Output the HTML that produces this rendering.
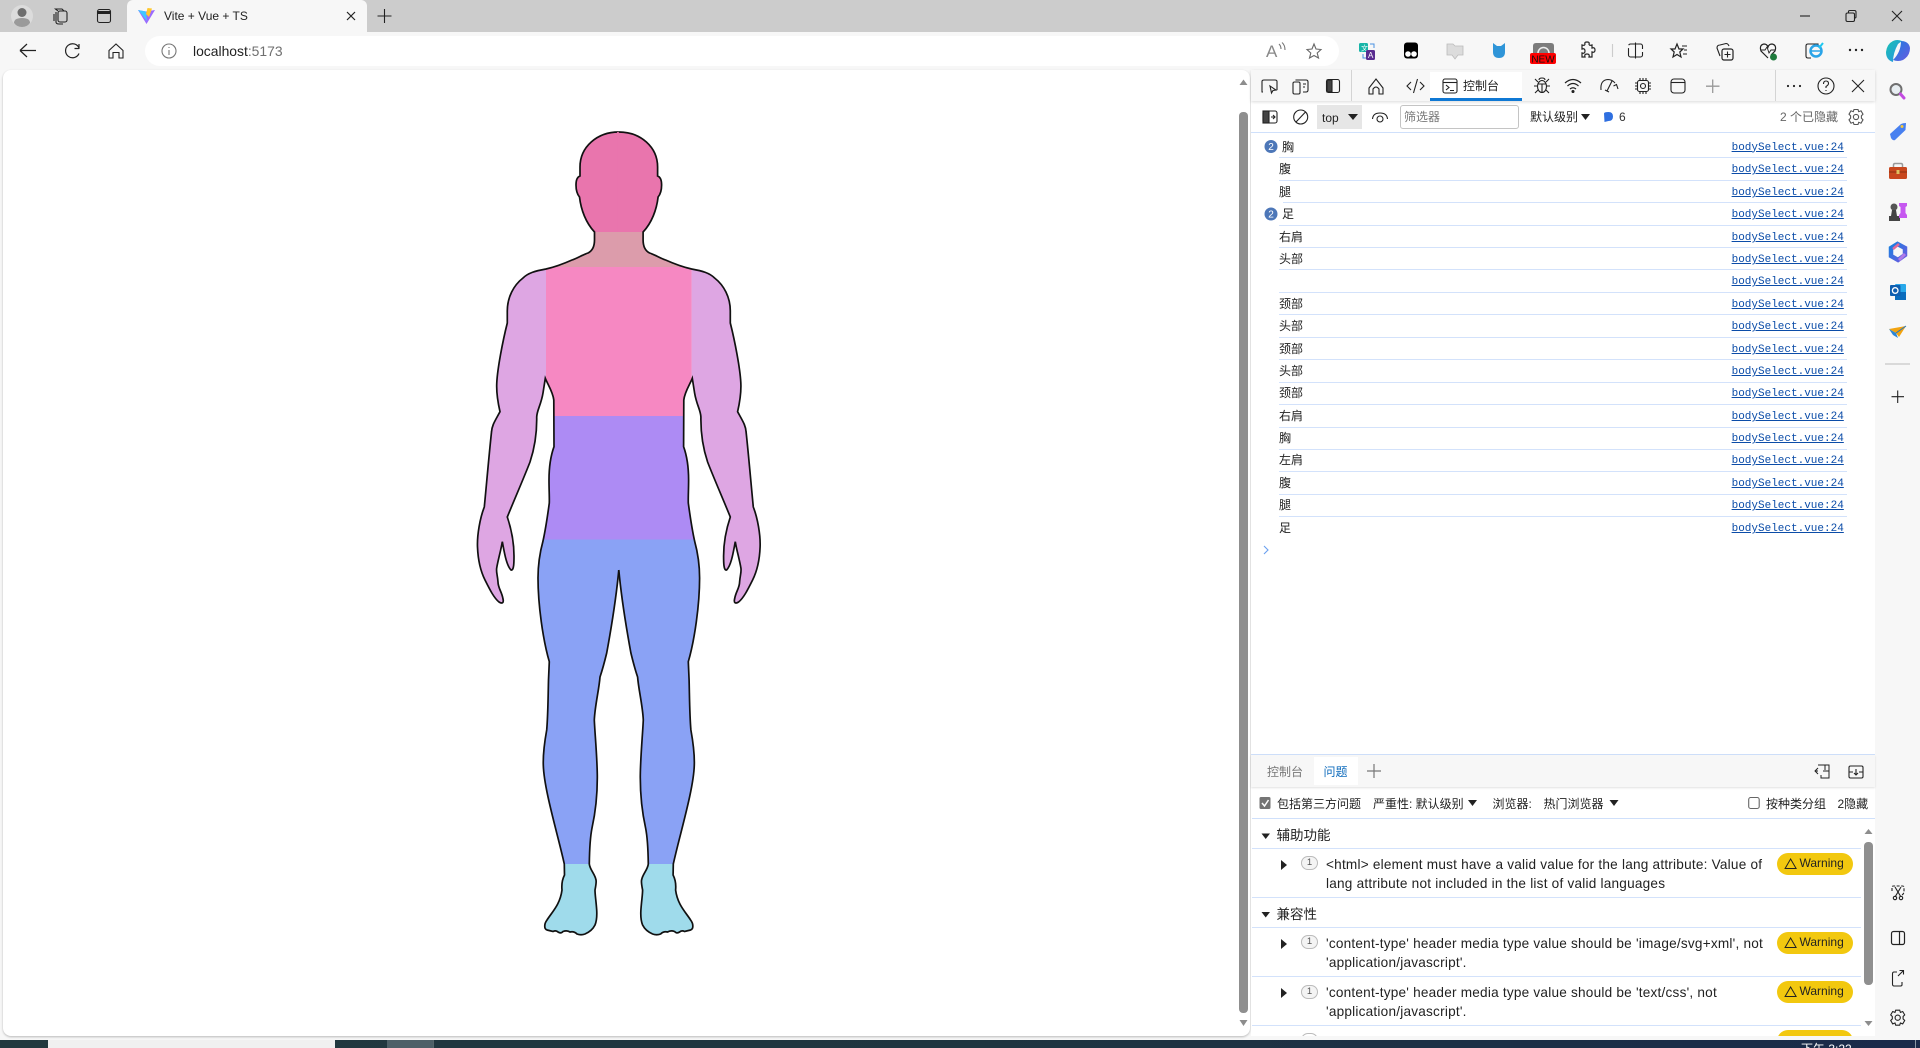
<!DOCTYPE html>
<html lang="zh"><head><meta charset="utf-8"><title>Vite + Vue + TS</title>
<style>
html,body{margin:0;padding:0;width:1920px;height:1048px;overflow:hidden;background:#f7f7f7;font-family:"Liberation Sans","Noto Sans CJK SC",sans-serif;color:#222}
.a{position:absolute}
.t{position:absolute;white-space:nowrap;font-size:12px;line-height:16px;height:16px}
.s{position:absolute;left:1279px;width:568px;height:1px;background:#d3e2fb}
.l{position:absolute;left:1731.6px;font:11px/16px "Liberation Mono",monospace;color:#0b4ca8;text-decoration:underline;white-space:nowrap;margin-top:1px}
.b{position:absolute;height:1px;background:#d3e2fb;left:1252px;width:609px}
.m{position:absolute;left:1326px;font-size:13.6px;letter-spacing:.22px;line-height:16px;white-space:nowrap;color:#222}
.w{position:absolute;left:1776.5px;width:76px;height:22px;border-radius:11px;background:#f2c80f}
.w span{position:absolute;left:23px;top:2px;font-size:12px;line-height:16px;color:#222}
.n{position:absolute;left:1301px;width:15px;height:12px;border:1px solid #bbb;border-radius:7px;background:#f4f4f4;font-size:9.5px;line-height:12px;text-align:center;color:#555}
</style></head><body>
<div class="a" style="left:0;top:0;width:1920px;height:32px;background:#cccccc"></div>
<div class="a" style="left:127px;top:0;width:240px;height:32px;background:#f7f7f7;border-radius:6px 6px 0 0"></div>
<div class="t" style="left:164px;top:8px">Vite + Vue + TS</div>
<div class="a" style="left:145px;top:36px;width:1194px;height:30px;background:#fff;border-radius:15px"></div>
<div class="t" style="left:193px;top:43px;font-size:13.9px">localhost<span style="color:#6f6f6f">:5173</span></div>

<div class="a" style="left:3px;top:70px;width:1247px;height:966px;background:#fff;border-radius:8px;box-shadow:0 1px 2px rgba(0,0,0,.25)"></div>
<div class="a" style="left:1239px;top:112px;width:9px;height:901px;background:#8f8f8f;border-radius:4px"></div>

<div class="a" style="left:1251px;top:70px;width:624px;height:966px;background:#fff"></div>
<div class="a" style="left:1251px;top:70px;width:624px;height:31px;background:#f7f7f7;box-shadow:0 1px 3px rgba(0,0,0,.15)"></div>
<div class="a" style="left:1430px;top:72px;width:92px;height:29px;background:#fff;border-bottom:0"></div>
<div class="a" style="left:1430px;top:98px;width:92px;height:3px;background:#0f78d4"></div>
<div class="a" style="left:1351px;top:70px;width:1px;height:31px;background:#d4d4d4"></div>
<div class="a" style="left:1775px;top:70px;width:1px;height:31px;background:#d4d4d4"></div>
<div class="t" style="left:1463px;top:78px">控制台</div>

<div class="a" style="left:1317px;top:105px;width:45px;height:24px;background:#e6e6e6"></div>
<div class="t" style="left:1322px;top:110px">top</div>
<div class="a" style="left:1399.5px;top:105px;width:117px;height:22px;background:#fff;border:1px solid #c4c4c4;border-radius:3px"></div>
<div class="t" style="left:1404px;top:109px;color:#777">筛选器</div>
<div class="t" style="left:1530px;top:109px">默认级别</div>
<div class="t" style="left:1619px;top:109px;color:#333">6</div>
<div class="t" style="left:1780px;top:109px;color:#666">2 个已隐藏</div>
<div class="a" style="left:1251px;top:132px;width:624px;height:1px;background:#cfe0fb"></div>

<div class="s" style="top:157px"></div><div class="s" style="top:180px"></div><div class="s" style="top:202px;left:1283px;width:564px"></div><div class="s" style="top:225px"></div><div class="s" style="top:247px"></div><div class="s" style="top:269px"></div><div class="s" style="top:292px"></div><div class="s" style="top:314px"></div><div class="s" style="top:337px"></div><div class="s" style="top:359px"></div><div class="s" style="top:382px"></div><div class="s" style="top:404px"></div><div class="s" style="top:427px"></div><div class="s" style="top:449px"></div><div class="s" style="top:471px"></div><div class="s" style="top:494px"></div><div class="s" style="top:516px"></div>

<div class="t" style="left:1282px;top:139px">胸</div><span class="l" style="top:138.5px">bodySelect.vue:24</span>
<div class="t" style="left:1279px;top:161px">腹</div><span class="l" style="top:161px">bodySelect.vue:24</span>
<div class="t" style="left:1279px;top:184px">腿</div><span class="l" style="top:184px">bodySelect.vue:24</span>
<div class="t" style="left:1282px;top:206px">足</div><span class="l" style="top:206px">bodySelect.vue:24</span>
<div class="t" style="left:1279px;top:229px">右肩</div><span class="l" style="top:229px">bodySelect.vue:24</span>
<div class="t" style="left:1279px;top:251px">头部</div><span class="l" style="top:251px">bodySelect.vue:24</span>
<span class="l" style="top:273px">bodySelect.vue:24</span>
<div class="t" style="left:1279px;top:296px">颈部</div><span class="l" style="top:296px">bodySelect.vue:24</span>
<div class="t" style="left:1279px;top:318px">头部</div><span class="l" style="top:318px">bodySelect.vue:24</span>
<div class="t" style="left:1279px;top:341px">颈部</div><span class="l" style="top:341px">bodySelect.vue:24</span>
<div class="t" style="left:1279px;top:363px">头部</div><span class="l" style="top:363px">bodySelect.vue:24</span>
<div class="t" style="left:1279px;top:385px">颈部</div><span class="l" style="top:385px">bodySelect.vue:24</span>
<div class="t" style="left:1279px;top:408px">右肩</div><span class="l" style="top:408px">bodySelect.vue:24</span>
<div class="t" style="left:1279px;top:430px">胸</div><span class="l" style="top:430px">bodySelect.vue:24</span>
<div class="t" style="left:1279px;top:452px">左肩</div><span class="l" style="top:452px">bodySelect.vue:24</span>
<div class="t" style="left:1279px;top:475px">腹</div><span class="l" style="top:475px">bodySelect.vue:24</span>
<div class="t" style="left:1279px;top:497px">腿</div><span class="l" style="top:497px">bodySelect.vue:24</span>
<div class="t" style="left:1279px;top:520px">足</div><span class="l" style="top:520px">bodySelect.vue:24</span>

<div class="a" style="left:1251px;top:754px;width:624px;height:1px;background:#cfe0fb"></div>
<div class="a" style="left:1251px;top:755px;width:624px;height:32px;background:#f7f7f7;box-shadow:0 1px 2px rgba(0,0,0,.12)"></div>
<div class="a" style="left:1314px;top:757px;width:44px;height:28px;background:#fff"></div>
<div class="t" style="left:1267px;top:764px;color:#777">控制台</div>
<div class="t" style="left:1323.5px;top:764px;color:#0f6cbd">问题</div>
<div class="t" style="left:1277px;top:796px">包括第三方问题</div>
<div class="t" style="left:1373px;top:796px">严重性: 默认级别</div>
<div class="t" style="left:1492.5px;top:796px">浏览器:</div>
<div class="t" style="left:1543.5px;top:796px">热门浏览器</div>
<div class="t" style="left:1766px;top:796px">按种类分组</div>
<div class="t" style="left:1837.5px;top:796px">2隐藏</div>
<div class="a" style="left:1252px;top:818px;width:623px;height:1px;background:#cfe0fb"></div>

<div class="t" style="left:1276.5px;top:828px;font-size:13.5px">辅助功能</div>
<div class="b" style="top:848px"></div>
<span class="n" style="top:856px">1</span>
<div class="m" style="top:857px">&lt;html&gt; element must have a valid value for the lang attribute: Value of</div>
<div class="m" style="top:876px">lang attribute not included in the list of valid languages</div>
<div class="w" style="top:853px"><span>Warning</span></div>
<div class="b" style="top:897px"></div>
<div class="t" style="left:1276.5px;top:907px;font-size:13.5px">兼容性</div>
<div class="b" style="top:927px"></div>
<span class="n" style="top:935px">1</span>
<div class="m" style="top:936px">'content-type' header media type value should be 'image/svg+xml', not</div>
<div class="m" style="top:955px">'application/javascript'.</div>
<div class="w" style="top:932px"><span>Warning</span></div>
<div class="b" style="top:976px"></div>
<span class="n" style="top:985px">1</span>
<div class="m" style="top:985px">'content-type' header media type value should be 'text/css', not</div>
<div class="m" style="top:1004px">'application/javascript'.</div>
<div class="w" style="top:981px"><span>Warning</span></div>
<div class="b" style="top:1025px"></div>
<div class="a" style="left:1252px;top:1030px;width:623px;height:6px;overflow:hidden">
 <div class="a" style="left:49px;top:3px;width:15px;height:12px;border:1px solid #bbb;border-radius:7px"></div>
 <div class="a" style="left:524.5px;top:0;width:76px;height:22px;border-radius:11px;background:#f2c80f"></div>
</div>
<div class="a" style="left:1864px;top:842px;width:9px;height:143px;background:#8f8f8f;border-radius:4px"></div>

<div class="a" style="left:0;top:1040px;width:1920px;height:8px;background:linear-gradient(90deg,#22393f,#1f3540 50%,#1a2a4a);overflow:hidden">
 <div class="a" style="left:48px;top:0;width:287px;height:8px;background:#f0f0f0"></div>
 <div class="a" style="left:387px;top:0;width:46px;height:8px;background:#4d6068"></div>
 <div class="a" style="left:433px;top:0;width:1px;height:8px;background:#56666c"></div>
 <div class="a" style="left:1915px;top:0;width:1px;height:8px;background:#8a97a5"></div>
 <div class="t" style="left:1801px;top:1px;color:#fff;font-size:12px">下午 3:22</div>
</div>

<svg class="a" style="left:0;top:0" width="1920" height="1048" viewBox="0 0 1920 1048">
<defs>
<path id="half" d="M618.8,132C597,132 580,147 580,167L580,176C577,177 576,181 576,185C576,190 577,194 579.5,197C581,210 586,223 594.5,232L594.5,240C594.5,247 592,251 588,253C582,255 578,258 572,260C563,264 555,267 546,269C535,271 528,273 523,278C514,285 507,297 507.3,312L507.3,323C503,340 497,370 496.7,385C496.5,395 498,403 500,411.7C495,421 492,425 491.5,432C489,455 486,490 484.3,507C480,518 477,535 477.5,547C478,560 481,572 485,580C490,590 494,598 499,602C502,604 504,603 503,599C502,592 498,588 498,582C497.5,575 496,572 496.7,568C498,560 501,550 502.3,541.7C504,550 506,565 511,570C514,571 514,562 514,556C514,540 511,528 507.3,517C515,498 523,480 530,462C534,450 537,435 536.7,417C537,410 541,405 543,393L545.3,378.3C548,385 553,392 553.8,400L554,446.7C551,455 549,465 549,480C549,490 549.5,497 549.3,503C547,520 545,532 543,541C540,552 538,565 538,578C538,605 543,640 549.3,661.7L548.5,680C548,700 548,715 546.7,730C544,745 543,755 543.3,765C544,790 558,835 564.3,864L564.5,875C562,880 561.5,885 562,890C560,905 552,912 547,920C544,924 544,929 547,930L553,931.5Q556,930 558,932Q561,934 563,931.5Q567,930 570,932Q574,931 577,934Q581,935.5 585,934Q592,931 595,925C597,920 597,915 596.7,910C596,900 595,895 595,890C596,885 596.5,882 596,880C595,874 590,870 589.3,864C589.5,850 590,838 592,828C596,810 597.5,795 597.3,775C597,755 595,735 594.3,720C595,705 599,690 600,677C603,668 605,660 606.7,653C610,635 616,600 618.8,570"/>
<clipPath id="c"><path d="M618.8,132C597,132 580,147 580,167L580,176C577,177 576,181 576,185C576,190 577,194 579.5,197C581,210 586,223 594.5,232L594.5,240C594.5,247 592,251 588,253C582,255 578,258 572,260C563,264 555,267 546,269C535,271 528,273 523,278C514,285 507,297 507.3,312L507.3,323C503,340 497,370 496.7,385C496.5,395 498,403 500,411.7C495,421 492,425 491.5,432C489,455 486,490 484.3,507C480,518 477,535 477.5,547C478,560 481,572 485,580C490,590 494,598 499,602C502,604 504,603 503,599C502,592 498,588 498,582C497.5,575 496,572 496.7,568C498,560 501,550 502.3,541.7C504,550 506,565 511,570C514,571 514,562 514,556C514,540 511,528 507.3,517C515,498 523,480 530,462C534,450 537,435 536.7,417C537,410 541,405 543,393L545.3,378.3C548,385 553,392 553.8,400L554,446.7C551,455 549,465 549,480C549,490 549.5,497 549.3,503C547,520 545,532 543,541C540,552 538,565 538,578C538,605 543,640 549.3,661.7L548.5,680C548,700 548,715 546.7,730C544,745 543,755 543.3,765C544,790 558,835 564.3,864L564.5,875C562,880 561.5,885 562,890C560,905 552,912 547,920C544,924 544,929 547,930L553,931.5Q556,930 558,932Q561,934 563,931.5Q567,930 570,932Q574,931 577,934Q581,935.5 585,934Q592,931 595,925C597,920 597,915 596.7,910C596,900 595,895 595,890C596,885 596.5,882 596,880C595,874 590,870 589.3,864C589.5,850 590,838 592,828C596,810 597.5,795 597.3,775C597,755 595,735 594.3,720C595,705 599,690 600,677C603,668 605,660 606.7,653C610,635 616,600 618.8,570L620.5,570L620.5,132Z"/></clipPath>
<g id="body">
<g clip-path="url(#c)">
<rect x="470" y="125" width="152" height="107" fill="#e975ad"/>
<rect x="470" y="232" width="152" height="35" fill="#dc9cab"/>
<rect x="470" y="267" width="76" height="340" fill="#dea6e3"/>
<rect x="546" y="267" width="76" height="149" fill="#f688c2"/>
<rect x="540" y="416" width="82" height="123.5" fill="#ad8bf4"/>
<rect x="520" y="539.5" width="102" height="324.5" fill="#8aa2f5"/>
<rect x="530" y="864" width="92" height="80" fill="#9fdbeb"/>
</g>
<use href="#half" fill="none" stroke="#111" stroke-width="1.7"/>
</g>
<linearGradient id="cp1" x1="0" y1="0" x2="1" y2="1"><stop offset="0" stop-color="#19c3b1"/><stop offset="1" stop-color="#2a8fe8"/></linearGradient>
<linearGradient id="cp2" x1="0" y1="0" x2="1" y2="1"><stop offset="0" stop-color="#1b7fe0"/><stop offset="1" stop-color="#6a5ae0"/></linearGradient>
<path id="warn" d="M0,-5L5.5,4.5H-5.5Z" fill="none" stroke="#222" stroke-width="1"/>
</defs>
<use href="#body"/>
<use href="#body" transform="translate(1237.6,0) scale(-1,1)"/>

<g fill="none" stroke="#222" stroke-width="1.1">
<!-- tab strip -->
<circle cx="22" cy="16" r="11" fill="#dcdcdc" stroke="none"/>
<circle cx="22" cy="12.5" r="4.5" fill="#6e6e6e" stroke="none"/>
<path d="M14,23Q14,18 22,18Q30,18 30,23Q27,27 22,27Q17,27 14,23Z" fill="#9a9a9a" stroke="none"/>
<g transform="translate(61,16)"><rect x="-3" y="-5" width="9" height="11" rx="2"/><path d="M-5,-4V6Q-5,8 -2,8H2M-7,-2V5"/><path d="M-3,-5L-5.5,-7H1L3,-5"/></g>
<g transform="translate(104,16)"><rect x="-6.5" y="-6.5" width="13" height="13" rx="2"/><path d="M-6.5,-3.5H6.5" stroke-width="3"/></g>
<path d="M347,12L355,20M355,12L347,20" stroke-width="1.2"/>
<path d="M384.5,9V23M377.5,16H391.5" stroke-width="1.1"/>
<!-- nav -->
<path d="M20,50.5H36M20,50.5L27,44M20,50.5L27,57" stroke-width="1.2"/>
<path d="M79,48A7,7 0 1 0 79,53.5M79,44V48.5H74.5" stroke-width="1.2" stroke-linejoin="round"/>
<path d="M109,50.5L116,44L123,50.5V58H119V52.5H113V58H109Z" stroke-width="1.1"/>
<circle cx="169" cy="51" r="7" stroke="#777"/><path d="M169,50V55M169,47V48" stroke="#777"/>
<!-- read aloud & star -->
<path d="M1279,44Q1281,46 1281,49M1282,42.5Q1285,45 1285,50" stroke="#777"/>
<path d="M1314,44L1316,49L1321,49.5L1317.2,53L1318.5,58L1314,55.5L1309.5,58L1310.8,53L1307,49.5L1312,49Z" stroke="#666"/>
<!-- window controls -->
<path d="M1800,16H1810"/>
<rect x="1846" y="13" width="8.5" height="8.5" rx="1.5"/><path d="M1848.5,13V11.5Q1848.5,10.5 1850,10.5H1854.5Q1856,10.5 1856,12V17Q1856,18 1854.5,18"/>
<path d="M1892,11L1902,21M1902,11L1892,21" stroke-width="1.1"/>
<!-- toolbar extension icons -->
<path d="M1582,45Q1585,46 1585,44Q1584,42 1587,42Q1590,42 1589,44Q1589,46 1592,45V48Q1595,47 1595,50Q1595,53 1592,52V57H1589Q1590,54 1587,54Q1584,54 1585,57H1582V53Q1585,54 1585,51Q1585,48 1582,49Z" stroke-width="1.2"/>
<path d="M1612.5,44V57" stroke="#ccc"/>
<path d="M1635.5,42.5V58.5" stroke-width="1.1"/><rect x="1628.5" y="44" width="14" height="13" rx="2" stroke-width="1.1" stroke-dasharray="16 3 26 3"/>
<path d="M1677,44L1679,49H1683L1679.8,52L1681,57L1677,54.5L1673,57L1674.2,52L1671,49H1675Z" stroke-width="1.2"/><path d="M1682,46H1687M1684,50H1687M1683,54H1687"/>
<rect x="1722" y="49" width="11" height="11" rx="2" stroke-width="1.2"/><path d="M1727.5,51.5V57.5M1724.5,54.5H1730.5"/><path d="M1720,56L1717,48Q1717,45 1720,45L1726,43.5Q1728,43.5 1729,46" stroke-width="1.1"/>
<path d="M1768,58L1761,51Q1759,45 1764,44Q1767,44 1768,47Q1769,44 1772,44Q1777,45 1775,51L1771,55" stroke-width="1.2"/><path d="M1761,50H1765L1767,47L1769,53L1771,50H1775" stroke-width=".9"/>
<path d="M1808,44H1818V47M1808,44Q1806,44 1806,46V56Q1806,58 1808,58H1811" stroke-width="1.1"/>
</g>
<g fill="#222">
<circle cx="1850" cy="50" r="1.2"/><circle cx="1856" cy="50" r="1.2"/><circle cx="1862" cy="50" r="1.2"/>
<circle cx="1788" cy="86" r="1.1"/><circle cx="1794" cy="86" r="1.1"/><circle cx="1800" cy="86" r="1.1"/>
</g>
<text x="1266" y="57" font-family="Liberation Sans" font-size="17" fill="#888">A</text>
<!-- translate -->
<rect x="1359" y="43" width="9" height="9" rx="1.5" fill="#18b5a8"/><text x="1361" y="50.5" font-size="7" fill="#fff" font-family="Noto Sans CJK SC">文</text>
<rect x="1366" y="50" width="9" height="10" rx="1.5" fill="#5a2c90"/><text x="1368" y="58" font-size="8" fill="#fff" font-family="Liberation Sans">A</text>
<path d="M1370,44H1374V48M1363,54V58H1366" fill="none" stroke="#4a90e0"/>
<!-- tamper -->
<rect x="1404" y="42.5" width="14" height="16" rx="3" fill="#000"/><circle cx="1408" cy="54" r="2.8" fill="#fff"/><circle cx="1414" cy="54" r="2.8" fill="#fff"/>
<!-- gray folder -->
<path d="M1447,44H1453L1455,46H1463V55H1458L1455,59L1452,55H1447Z" fill="#dcdcdc" stroke="#bbb" stroke-width=".8"/>
<!-- cat -->
<path d="M1493,43L1497,46H1501L1505,43V52Q1505,58 1499,58Q1493,58 1493,52Z" fill="#2f95d8"/>
<!-- camera NEW -->
<path d="M1533,53V46Q1533,43 1536,43H1551Q1554,43 1554,46V53Z" fill="#7c7c7c"/><circle cx="1543.5" cy="53" r="5.5" fill="none" stroke="#eee" stroke-width="1.5"/>
<rect x="1530" y="53" width="26" height="11" rx="2" fill="#f00"/><text x="1543" y="62.5" font-size="10" text-anchor="middle" fill="#111" font-family="Liberation Sans">NEW</text>
<!-- IE -->
<circle cx="1816" cy="51" r="5.5" fill="none" stroke="#2aa4e8" stroke-width="2.5"/><path d="M1811,51H1822" stroke="#2aa4e8" stroke-width="1.5"/><path d="M1819,48L1823,43" stroke="#1ec8f0" stroke-width="2"/>
<circle cx="1773.5" cy="57" r="3.5" fill="#1e7a3c"/>
<!-- copilot -->
<path d="M1893,41Q1897,39 1902,41L1898,44Q1893,53 1893,62Q1886,60 1886,52Q1887,44 1893,41Z" fill="url(#cp1)"/>
<path d="M1901,41Q1909,41 1910,48Q1910,56 1903,60Q1898,62 1893,60Q1901,52 1901,41Z" fill="url(#cp2)"/>
<!-- sidebar -->
<circle cx="1896" cy="89.5" r="5.5" fill="#e8eef2" stroke="#6f6f6f" stroke-width="2"/><path d="M1900.5,94L1904,98" stroke="#c24be0" stroke-width="3" stroke-linecap="round"/>
<path d="M1890,134L1901,124Q1903,123 1906,123L1905.5,130L1895,140Q1893,141 1891,138Z" fill="#4880f0"/><circle cx="1902" cy="126.5" r="1.5" fill="#f7c83a"/>
<rect x="1889" y="167" width="18" height="12" rx="1.5" fill="#c8481f"/><path d="M1889,172H1907" stroke="#8b2f10"/><path d="M1893.5,167V165Q1893.5,163.5 1895,163.5H1901Q1902.5,163.5 1902.5,165V167" fill="none" stroke="#999" stroke-width="1.5"/><rect x="1896.5" y="170" width="3" height="4" fill="#e0c060"/>
<circle cx="1894" cy="207" r="3.5" fill="#555"/><path d="M1892,210H1896L1897,216H1900V221H1889V216H1891Z" fill="#444"/><path d="M1899,203H1907V206L1905.5,207V213L1907,215V218H1899V215L1900.5,213V207L1899,206Z" fill="#c658f0"/>
<path d="M1897.5,244L1905,248V255L1898,260L1891,256V248Z" fill="none" stroke="url(#cp2)" stroke-width="4.5"/><path d="M1893,249L1899,244" stroke="#e06b9a" stroke-width="2.5"/><path d="M1899,260L1905,254" stroke="#b07ae8" stroke-width="3"/>
<rect x="1895" y="284" width="11" height="15" rx="1" fill="#28a8ea"/><path d="M1895,292H1906V300H1895Z" fill="#0a6cbd"/><rect x="1890" y="285" width="10.5" height="11" rx="1" fill="#0f5fb0"/><circle cx="1895.2" cy="290.5" r="2.8" fill="none" stroke="#fff" stroke-width="1.3"/>
<path d="M1889,329L1906,326L1899,337L1896,333Z" fill="#f2a30f"/><path d="M1889,329L1896,333L1898,338L1893,335Z" fill="#2a86d8"/><path d="M1906,326L1896,333" stroke="#1f76c8"/>
<path d="M1885,364H1910" stroke="#bbb"/>
<g fill="none" stroke="#222" stroke-width="1.1">
<path d="M1897.7,390.5V403M1891.5,396.7H1904"/>
<!-- sidebar bottom -->
<path d="M1892,891V887.5Q1892,886 1893.5,886H1902.5Q1904,886 1904,887.5V891Q1904,894 1902,895" stroke-dasharray="3 1.5"/><path d="M1895,887L1901,897M1901,887L1895,897"/><circle cx="1895" cy="898" r="1.7"/><circle cx="1901" cy="898" r="1.7"/>
<rect x="1891.5" y="931.5" width="13" height="13" rx="2" stroke-width="1.2"/><path d="M1899.5,931.5V944.5" stroke-width="1.2"/>
<path d="M1902,982V985Q1902,986 1900,986H1894Q1892.5,986 1892.5,984V974Q1892.5,972 1894,972H1897M1898,976L1903,971M1899.5,970.5H1903.5V974.5" stroke-width="1.1"/>
<g transform="translate(1897.7,1017.7)"><circle r="2.6"/><path d="M-2,-7.5H2L2.7,-5.3L5,-6.2L7,-2.8L5.4,-1.2V1.2L7,2.8L5,6.2L2.7,5.3L2,7.5H-2L-2.7,5.3L-5,6.2L-7,2.8L-5.4,1.2V-1.2L-7,-2.8L-5,-6.2L-2.7,-5.3Z"/></g>
<!-- devtools top toolbar -->
<path d="M1263,92H1261.5Q1262,92 1262,91V81.5Q1262,80 1264,80H1275Q1277,80 1277,81.5V90M1270,86L1271.5,93L1273,90.5L1276,90Z"/>
<rect x="1293" y="82" width="7" height="12" rx="1.5"/><path d="M1296,80.5V80H1306Q1308,80 1308,82V90Q1308,92 1306,92H1303M1303,84H1306M1303,87H1305"/>
<rect x="1326.5" y="79.5" width="13" height="13" rx="2"/><rect x="1327" y="80" width="5" height="12" fill="#444"/>
<path d="M1369,88L1376,79L1383,88V94H1379V89Q1376,85 1373,89V94H1369Z"/>
<path d="M1411,82L1407,86L1411,90M1420,82L1424,86L1420,90M1417.5,79L1413.5,93"/>
<rect x="1443" y="79" width="14" height="14" rx="2"/><path d="M1443,82.5H1457"/><path d="M1446,85L1449,87.5L1446,90M1450,90.5H1454"/>
<ellipse cx="1542" cy="86.5" rx="4.5" ry="6"/><path d="M1537.5,84H1546.5M1539,80Q1539,78 1542,78Q1545,78 1545,80M1542,84V92.5M1535,79L1538,82M1549,79L1546,82M1534,86H1537.5M1550,86H1546.5M1535,93L1538,90M1549,93L1546,90"/>
<path d="M1565,83Q1573,76 1581,83M1567.5,86Q1573,81 1578.5,86M1570,89Q1573,86.5 1576,89" stroke-width="1.2"/><circle cx="1573" cy="91.5" r="1" fill="#222"/>
<path d="M1601,90Q1600,80 1608,79.5Q1612,79.5 1615,83M1612,81L1607,91M1605,90L1609,92M1613.5,86L1616.5,84.5L1618,89"/>
<rect x="1637.5" y="80.5" width="11" height="11" rx="2" stroke-width="1.1"/><circle cx="1643" cy="86" r="2.5"/><path d="M1640,78V80M1643,78V80M1646,78V80M1640,92V94M1643,92V94M1646,92V94M1635,83H1637M1635,86H1637M1635,89H1637M1649,83H1651M1649,86H1651M1649,89H1651"/>
<rect x="1671" y="79" width="14" height="14" rx="3"/><path d="M1671,82.5H1685"/>
<path d="M1712.7,79.5V93M1706,86.2H1719.5" stroke="#999" stroke-width="1.3"/>
<circle cx="1826" cy="86" r="8"/><path d="M1823.5,84Q1823.5,81 1826,81Q1828.5,81 1828.5,83.5Q1828.5,85 1826,86.5V88"/><path d="M1826,90V91"/>
<path d="M1852,80L1864,92M1864,80L1852,92"/>
<!-- second bar -->
<rect x="1263" y="111" width="14" height="12" rx="2"/><rect x="1263" y="111" width="6" height="12" fill="#444"/><path d="M1271,117H1275M1273,115L1275,117L1273,119"/>
<circle cx="1300.7" cy="117" r="7"/><path d="M1296,122L1305.5,112"/>
<path d="M1372.5,119Q1373,113 1380,113Q1387,113 1387.5,119" /><circle cx="1380" cy="119" r="3"/>
<g transform="translate(1856,117)" stroke="#555"><circle r="2.6"/><path d="M-2,-7.5H2L2.7,-5.3L5,-6.2L7,-2.8L5.4,-1.2V1.2L7,2.8L5,6.2L2.7,5.3L2,7.5H-2L-2.7,5.3L-5,6.2L-7,2.8L-5.4,1.2V-1.2L-7,-2.8L-5,-6.2L-2.7,-5.3Z"/></g>
<!-- prompt -->
<path d="M1264,546L1268,550L1264,554" stroke="#6aa0f0" stroke-width="1.1"/>
<!-- drawer icons -->
<path d="M1374,764V778M1367,771H1381" stroke="#777" stroke-width="1.2"/>
<path d="M1818,765H1829V778H1821V775M1825,765V770M1818,771L1815,771M1818,768L1815,771L1818,774M1823,771H1829" stroke-width="1"/>
<rect x="1849" y="766" width="14" height="12" rx="1.5"/><path d="M1849,772H1853M1859,772H1863M1856,769V775M1854,773L1856,775L1858,773"/>
<rect x="1748.7" y="797.5" width="10.5" height="11" rx="2" stroke="#666"/>
</g>
<!-- arrows -->
<g fill="#222">
<path d="M1348,114H1358L1353,120Z"/>
<path d="M1581,114H1590L1585.5,120Z"/>
<path d="M1468,800H1477L1472.5,806Z"/>
<path d="M1609.5,800H1618.5L1614,806Z"/>
<path d="M1261.5,833.5H1270L1265.7,839Z"/>
<path d="M1261.5,912H1270L1265.7,917.5Z"/>
<path d="M1281,860V870L1287,865Z"/><path d="M1281,939V949L1287,944Z"/><path d="M1281,988V998L1287,993Z"/>
</g>
<g fill="#8d8d8d">
<path d="M1239.5,85L1243.5,79.5L1247.5,85Z"/><path d="M1239.5,1020H1247.5L1243.5,1026Z"/>
<path d="M1864.5,834L1868.5,829L1872.5,834Z"/><path d="M1864.5,1021H1872.5L1868.5,1026Z"/>
</g>
<!-- badges -->
<circle cx="1271" cy="146.5" r="6.5" fill="#4d77b8"/><text x="1271" y="150" font-size="10" text-anchor="middle" fill="#fff" font-family="Liberation Sans">2</text>
<circle cx="1271" cy="214" r="6.5" fill="#4d77b8"/><text x="1271" y="217.5" font-size="10" text-anchor="middle" fill="#fff" font-family="Liberation Sans">2</text>
<!-- blue message -->
<path d="M1604,113.5Q1604,112 1608.5,112Q1613,112 1613,116.5Q1613,121 1608.5,121L1604.5,122Z" fill="#2f6fe0"/>
<!-- checkbox -->
<rect x="1259.5" y="797" width="11" height="12" rx="1.5" fill="#757575"/><path d="M1262,803L1264.5,806L1268.5,800" fill="none" stroke="#fff" stroke-width="1.5"/>
<!-- favicon -->
<path d="M138,10L146,11.5L155,10L146.5,24Z" fill="#9b6bff"/><path d="M138,10L146,11.5L147,21Z" fill="#41c6ff"/><path d="M147.5,8L152,8.5L149,17L146,14Z" fill="#ffc72b"/>
<!-- warning triangles -->
<use href="#warn" x="1790.6" y="864"/><use href="#warn" x="1790.6" y="943"/><use href="#warn" x="1790.6" y="992"/>
</svg>
</body></html>
